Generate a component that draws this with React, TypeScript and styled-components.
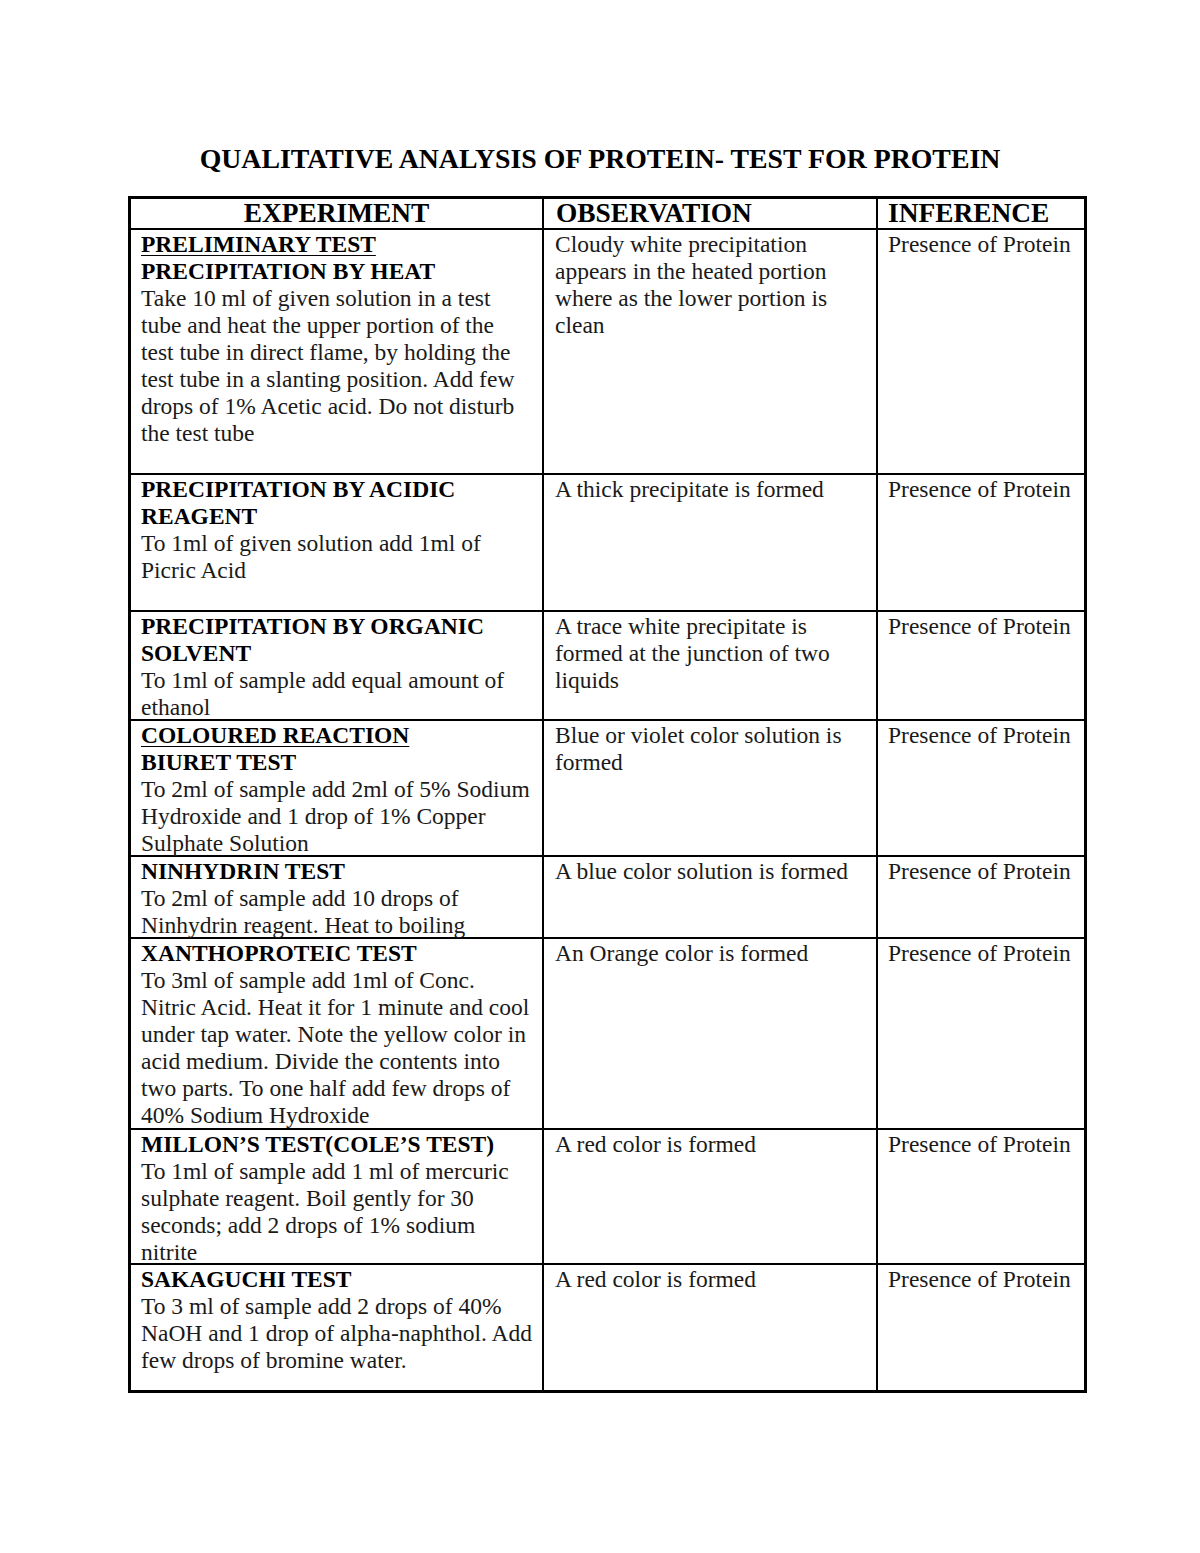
import React from "react";
import styled, { createGlobalStyle } from "styled-components";

const GlobalStyle = createGlobalStyle`
  html, body { margin: 0; padding: 0; background: #ffffff; }
  body { font-family: "Liberation Serif", "Times New Roman", serif; color: #111111; }
`;

const Page = styled.div`
  width: 1200px;
  min-height: 1553px;
  padding-top: 143px;
  box-sizing: border-box;
  display: flex;
  flex-direction: column;
`;

const Title = styled.h1`
  margin: 0 0 22px 0;
  font-size: 27.8px;
  line-height: 31px;
  font-weight: bold;
  text-align: center;
  color: #000;
`;

const Table = styled.div`
  width: 959px;
  margin-left: 128px;
  box-sizing: border-box;
  border: 3px solid #000;
  background: #000;
  display: flex;
  flex-direction: column;
  gap: 2px;
`;

const Row = styled.div<{ $h: number }>`
  display: grid;
  grid-template-columns: 411px 332px 206px;
  grid-template-rows: minmax(0, 1fr);
  gap: 2px;
  height: ${(p) => p.$h}px;
  flex: none;
`;

const HeadCell = styled.div<{ $center?: boolean; $pad: number }>`
  background: #fff;
  min-height: 0;
  font-size: 27.4px;
  line-height: 29px;
  font-weight: bold;
  color: #000;
  text-align: ${(p) => (p.$center ? "center" : "left")};
  padding-left: ${(p) => (p.$center ? 0 : p.$pad)}px;
  white-space: nowrap;
`;

const Cell = styled.div<{ $pad: number }>`
  background: #fff;
  min-height: 0;
  padding: 1px 0 0 ${(p) => p.$pad}px;
  font-size: 23.5px;
  line-height: 27px;
  white-space: nowrap;
`;

const Line = styled.div<{ $bold?: boolean; $under?: boolean }>`
  font-weight: ${(p) => (p.$bold ? "bold" : "normal")};
  text-decoration: ${(p) => (p.$under ? "underline" : "none")};
  text-underline-offset: 3px;
  text-decoration-thickness: 1px;
  color: ${(p) => (p.$bold ? "#000" : "#1a1a1a")};
`;

type L = { t: string; b?: boolean; u?: boolean };

type RowData = { h: number; exp: L[]; obs: string[]; inf: string };

const rows: RowData[] = [
  {
    h: 243,
    exp: [
      { t: "PRELIMINARY TEST", b: true, u: true },
      { t: "PRECIPITATION BY HEAT", b: true },
      { t: "Take 10 ml of given solution in a test" },
      { t: "tube and heat the upper portion of the" },
      { t: "test tube in direct flame, by holding the" },
      { t: "test tube in a slanting position. Add few" },
      { t: "drops of 1% Acetic acid. Do not disturb" },
      { t: "the test tube" },
    ],
    obs: [
      "Cloudy white precipitation",
      "appears in the heated portion",
      "where as the lower portion is",
      "clean",
    ],
    inf: "Presence of Protein",
  },
  {
    h: 135,
    exp: [
      { t: "PRECIPITATION BY ACIDIC", b: true },
      { t: "REAGENT", b: true },
      { t: "To 1ml of given solution add 1ml of" },
      { t: "Picric Acid" },
    ],
    obs: ["A thick precipitate is formed"],
    inf: "Presence of Protein",
  },
  {
    h: 107,
    exp: [
      { t: "PRECIPITATION BY ORGANIC", b: true },
      { t: "SOLVENT", b: true },
      { t: "To 1ml of sample add equal amount of" },
      { t: "ethanol" },
    ],
    obs: [
      "A trace white precipitate is",
      "formed at the junction of two",
      "liquids",
    ],
    inf: "Presence of Protein",
  },
  {
    h: 134,
    exp: [
      { t: "COLOURED REACTION", b: true, u: true },
      { t: "BIURET TEST", b: true },
      { t: "To 2ml of sample add 2ml of 5% Sodium" },
      { t: "Hydroxide and 1 drop of 1% Copper" },
      { t: "Sulphate Solution" },
    ],
    obs: ["Blue or violet color solution is", "formed"],
    inf: "Presence of Protein",
  },
  {
    h: 80,
    exp: [
      { t: "NINHYDRIN TEST", b: true },
      { t: "To 2ml of sample add 10 drops of" },
      { t: "Ninhydrin reagent. Heat to boiling" },
    ],
    obs: ["A blue color solution is formed"],
    inf: "Presence of Protein",
  },
  {
    h: 189,
    exp: [
      { t: "XANTHOPROTEIC TEST", b: true },
      { t: "To 3ml of sample add 1ml of Conc." },
      { t: "Nitric Acid. Heat it for 1 minute and cool" },
      { t: "under tap water. Note the yellow color in" },
      { t: "acid medium. Divide the contents into" },
      { t: "two parts. To one half add few drops of" },
      { t: "40% Sodium Hydroxide" },
    ],
    obs: ["An Orange color is formed"],
    inf: "Presence of Protein",
  },
  {
    h: 133,
    exp: [
      { t: "MILLON\u2019S TEST(COLE\u2019S TEST)", b: true },
      { t: "To 1ml of sample add 1 ml of mercuric" },
      { t: "sulphate reagent. Boil gently for 30" },
      { t: "seconds; add 2 drops of 1% sodium" },
      { t: "nitrite" },
    ],
    obs: ["A red color is formed"],
    inf: "Presence of Protein",
  },
  {
    h: 125,
    exp: [
      { t: "SAKAGUCHI TEST", b: true },
      { t: "To 3 ml of sample add 2 drops of 40%" },
      { t: "NaOH and 1 drop of alpha-naphthol. Add" },
      { t: "few drops of bromine water." },
    ],
    obs: ["A red color is formed"],
    inf: "Presence of Protein",
  },
];

export default function App() {
  return (
    <>
      <GlobalStyle />
      <Page>
        <Title>QUALITATIVE ANALYSIS OF PROTEIN- TEST FOR PROTEIN</Title>
        <Table>
          <Row $h={29}>
            <HeadCell $center $pad={0}>EXPERIMENT</HeadCell>
            <HeadCell $pad={12}>OBSERVATION</HeadCell>
            <HeadCell $pad={10}>INFERENCE</HeadCell>
          </Row>
          {rows.map((r, i) => (
            <Row key={i} $h={r.h}>
              <Cell $pad={10}>
                {r.exp.map((l, j) => (
                  <Line key={j} $bold={l.b} $under={l.u}>
                    {l.t}
                  </Line>
                ))}
              </Cell>
              <Cell $pad={11}>
                {r.obs.map((o, j) => (
                  <Line key={j}>{o}</Line>
                ))}
              </Cell>
              <Cell $pad={10}>
                <Line>{r.inf}</Line>
              </Cell>
            </Row>
          ))}
        </Table>
      </Page>
    </>
  );
}
